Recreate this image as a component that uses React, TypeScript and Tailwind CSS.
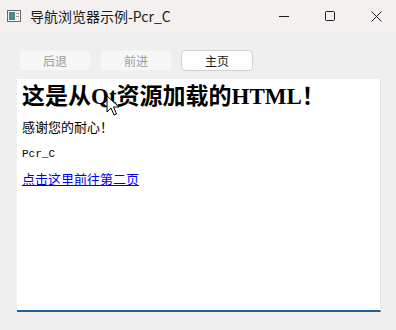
import React from 'react';

const cjk = { fontFamily: '"Noto Sans CJK SC", "Noto Sans", sans-serif' };
const serif = { fontFamily: '"Liberation Serif", "Noto Sans CJK SC", serif' };
const mono = { fontFamily: '"Liberation Mono", "Noto Sans CJK SC", monospace' };

const AppIcon = () => (
  <svg width="14" height="12" viewBox="0 0 14 12">
    <rect x="0.5" y="0.5" width="13" height="11" fill="#f4f4f4" stroke="#6a6a6a" />
    <rect x="2" y="2" width="6" height="8" fill="#4f8a8b" />
    <rect x="9" y="3" width="3" height="1" fill="#9a9a9a" />
    <rect x="9" y="6" width="3" height="1" fill="#9a9a9a" />
  </svg>
);

const NavButton = ({ label, enabled }: { label: string; enabled?: boolean }) => (
  <button
    className={
      enabled
        ? 'w-[72px] h-[21px] rounded-[4px] border border-[#d0d0d0] bg-[#fdfdfd] text-[12px] text-[#1a1a1a] flex items-center justify-center'
        : 'w-[72px] h-[21px] rounded-[4px] border border-[#f0f0f0] bg-[#f7f7f7] text-[12px] text-[#9c9c9c] flex items-center justify-center'
    }
    style={cjk}
  >
    {label}
  </button>
);

export default function App() {
  return (
    <div className="w-[396px] h-[330px] bg-[#efefef] flex flex-col overflow-hidden relative">
      {/* Title bar */}
      <div className="h-[32px] bg-[#f3f0ef] flex items-center shrink-0">
        <div className="pl-[7px] pr-[9px] flex items-center"><AppIcon /></div>
        <span className="text-[14px] text-[#1b1b1b]" style={cjk}>导航浏览器示例-Pcr_C</span>
        <div className="ml-auto mr-[-3px] flex items-center h-full">
          <div className="w-[46px] h-full flex items-center justify-center">
            <svg width="10" height="10" viewBox="0 0 10 10"><path d="M0 5.5h10" stroke="#1b1b1b" strokeWidth="1" /></svg>
          </div>
          <div className="w-[46px] h-full flex items-center justify-center">
            <svg width="10" height="10" viewBox="0 0 10 10"><rect x="0.5" y="0.5" width="9" height="9" rx="1" fill="none" stroke="#1b1b1b" /></svg>
          </div>
          <div className="w-[46px] h-full flex items-center justify-center">
            <svg width="11" height="11" viewBox="0 0 11 11"><path d="M0.5 0.5l10 10M10.5 0.5l-10 10" stroke="#1b1b1b" strokeWidth="1" /></svg>
          </div>
        </div>
      </div>

      {/* Toolbar */}
      <div className="flex gap-[9px] pl-[19px] pt-[18px]">
        <NavButton label="后退" />
        <NavButton label="前进" />
        <NavButton label="主页" enabled />
      </div>

      {/* Web view */}
      <div className="ml-[17px] mt-[8px] w-[364px] h-[233px] bg-white border-r border-[#e2e2e2] border-b-2 border-b-[#1f5f99] px-[5px] pt-[2px]">
        <h1 className="text-[23px] font-bold leading-[32px] text-black" style={serif}>这是从Qt资源加载的HTML！</h1>
        <p className="text-[13px] leading-[16px] mt-[6px] text-black" style={cjk}>感谢您的耐心！</p>
        <p className="text-[11px] leading-[14px] mt-[12px] text-black" style={mono}>Pcr_C</p>
        <a href="#" className="block text-[13px] leading-[16px] mt-[10px] text-[#0000ee] underline" style={cjk}>点击这里前往第二页</a>
      </div>

      {/* Mouse cursor */}
      <svg className="absolute left-[106px] top-[95px]" width="14" height="21" viewBox="0 0 14 21">
        <path d="M1 1v16l4-4 3 7 2.5-1-3-7h5.5z" fill="#fff" stroke="#000" strokeWidth="1" strokeLinejoin="round" />
      </svg>
    </div>
  );
}
